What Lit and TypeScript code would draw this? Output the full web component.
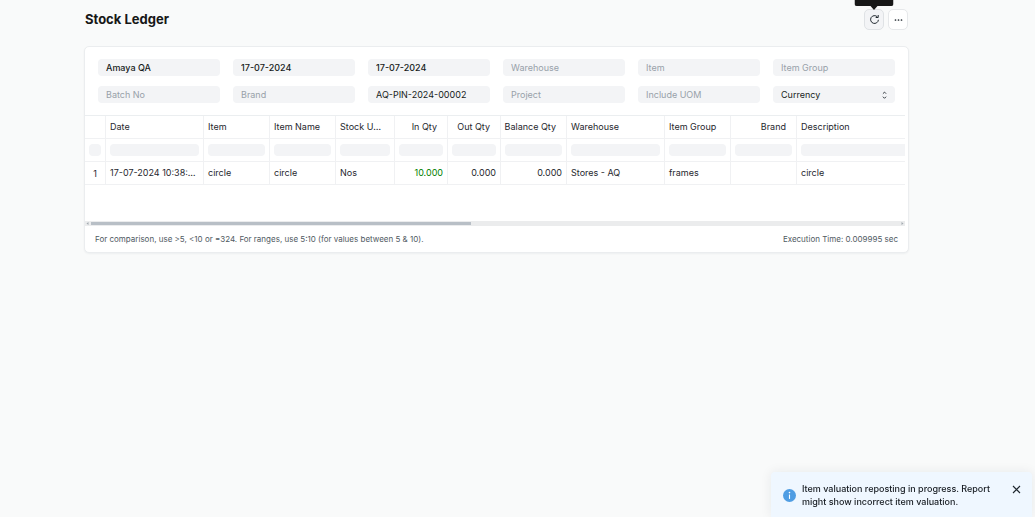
import { LitElement, html, css, svg } from "lit";
import { customElement } from "lit/decorators.js";
import { classMap } from "lit/directives/class-map.js";

interface Filter {
  label: string;
  value?: string;
  required?: boolean;
  options?: string[];
}

interface Column {
  label: string;
  width: number;
  value: string;
  right?: boolean;
  positive?: boolean;
}

const FILTERS: Filter[] = [
  { label: "Company", value: "Amaya QA", required: true },
  { label: "From Date", value: "17-07-2024", required: true },
  { label: "To Date", value: "17-07-2024", required: true },
  { label: "Warehouse" },
  { label: "Item" },
  { label: "Item Group" },
  { label: "Batch No" },
  { label: "Brand" },
  { label: "Voucher #", value: "AQ-PIN-2024-00002" },
  { label: "Project" },
  { label: "Include UOM" },
  { label: "Valuation Field Type", options: ["Currency", "Float"] },
];

const COLUMNS: Column[] = [
  { label: "Date", width: 98, value: "17-07-2024 10:38:45" },
  { label: "Item", width: 66, value: "circle" },
  { label: "Item Name", width: 66, value: "circle" },
  { label: "Stock UOM", width: 59, value: "Nos" },
  { label: "In Qty", width: 53, value: "10.000", right: true, positive: true },
  { label: "Out Qty", width: 53, value: "0.000", right: true },
  { label: "Balance Qty", width: 66, value: "0.000", right: true },
  { label: "Warehouse", width: 98, value: "Stores - AQ" },
  { label: "Item Group", width: 66, value: "frames" },
  { label: "Brand", width: 66, value: "", right: true },
  { label: "Description", width: 130, value: "circle" },
];

@customElement("report-filters")
export class ReportFilters extends LitElement {
  static styles = css`
    :host {
      display: grid;
      grid-template-columns: repeat(6, 1fr);
      gap: 10px 13px;
      padding: 12px 13px;
    }
    .field {
      position: relative;
      display: block;
      min-width: 0;
    }
    .control {
      display: block;
      box-sizing: border-box;
      width: 100%;
      height: 17px;
      margin: 0;
      padding: 0 8px;
      border: 0;
      border-radius: 4px;
      background: #f3f4f6;
      color: #171c22;
      font: 400 9px/17px Inter, sans-serif;
      appearance: none;
      outline: none;
    }
    .control::placeholder {
      color: #98a1a9;
      opacity: 1;
    }
    .required {
      font-weight: 500;
    }
    .arrows {
      position: absolute;
      right: 7px;
      top: 4px;
      width: 7px;
      height: 10px;
      pointer-events: none;
    }
  `;

  render() {
    return FILTERS.map((f) =>
      f.options
        ? html`<label class="field">
            <select class="control" aria-label=${f.label}>
              ${f.options.map((o) => html`<option>${o}</option>`)}
            </select>
            <svg class="arrows" viewBox="0 0 7 10" fill="none" stroke="#1f272e" stroke-width="0.9">
              <path d="M1.900 3.700 3.500 2.100 5.100 3.700M1.900 6.700 3.500 8.300 5.100 6.700" />
            </svg>
          </label>`
        : html`<label class="field">
            <input
              class=${classMap({ control: true, required: !!f.required })}
              type="text"
              aria-label=${f.label}
              placeholder=${f.label}
              .value=${f.value ?? ""}
            />
          </label>`
    );
  }
}

@customElement("report-table")
export class ReportTable extends LitElement {
  static styles = css`
    :host {
      display: block;
      margin-right: 3px;
    }
    .viewport {
      overflow: hidden;
      border-top: 1px solid #ebeef0;
      padding-bottom: 36px;
    }
    .grid {
      table-layout: fixed;
      border-collapse: separate;
      border-spacing: 0;
      width: 842px;
      color: #1f272e;
      font: 400 9px/12px Inter, sans-serif;
    }
    .cell {
      box-sizing: border-box;
      height: 23px;
      padding: 0 4px;
      border-right: 1px solid #f0f1f3;
      border-bottom: 1px solid #f0f1f3;
      text-align: left;
      font-weight: 400;
      white-space: nowrap;
      overflow: hidden;
      text-overflow: ellipsis;
    }
    .head {
      padding-right: 10px;
    }
    .right {
      text-align: right;
    }
    .head.right {
      padding-left: 0;
    }
    .index {
      padding-top: 2px;
      text-align: center;
    }
    .positive {
      color: green;
    }
    .search {
      display: block;
      box-sizing: border-box;
      width: 100%;
      height: 12px;
      margin: 0;
      padding: 0 4px;
      border: 0;
      border-radius: 4px;
      background: #f3f4f6;
      font: 400 9px/12px Inter, sans-serif;
      outline: none;
    }
    .track {
      display: flex;
      align-items: center;
      height: 5px;
      gap: 2px;
      padding: 0 1px;
      background: #ebeced;
    }
    .arrow {
      width: 3px;
      height: 3px;
      fill: #a3aab0;
    }
    .rail {
      flex: 1;
    }
    .thumb {
      width: 47%;
      height: 3px;
      background: #b8bfc6;
    }
  `;

  render() {
    return html`
      <div class="viewport">
        <table class="grid">
          <colgroup>
            <col style="width:21px" />
            ${COLUMNS.map((c) => html`<col style="width:${c.width}px" />`)}
          </colgroup>
          <thead>
            <tr>
              <th class="cell"></th>
              ${COLUMNS.map(
                (c) => html`<th scope="col" class=${classMap({ cell: true, head: true, right: !!c.right })}>${c.label}</th>`
              )}
            </tr>
            <tr>
              <td class="cell"><input class="search" type="text" aria-label="Filter row number" /></td>
              ${COLUMNS.map(
                (c) => html`<td class="cell"><input class="search" type="text" aria-label="Filter ${c.label}" /></td>`
              )}
            </tr>
          </thead>
          <tbody>
            <tr>
              <td class="cell index">1</td>
              ${COLUMNS.map(
                (c) =>
                  html`<td class=${classMap({ cell: true, right: !!c.right, positive: !!c.positive })}>${c.value}</td>`
              )}
            </tr>
          </tbody>
        </table>
      </div>
      <div class="track">
        <svg class="arrow" viewBox="0 0 3 3"><path d="M2.5 0v3L.5 1.5z" /></svg>
        <div class="rail"><div class="thumb"></div></div>
        <svg class="arrow" viewBox="0 0 3 3"><path d="M.5 0v3l2-1.5z" /></svg>
      </div>
    `;
  }
}

@customElement("toast-message")
export class ToastMessage extends LitElement {
  static styles = css`
    :host {
      display: flex;
      align-items: flex-start;
      box-sizing: border-box;
      width: 261px;
      padding: 10px 11px 9px 12px;
      border-radius: 4px 4px 0 0;
      background: #eff7ff;
      box-shadow: 0 0 12px rgba(25, 39, 52, 0.08);
    }
    .info {
      flex: none;
      width: 13px;
      height: 13px;
      margin: 7px 6px 0 0;
    }
    .text {
      flex: 1;
      margin: 0;
      color: #171c22;
      font: 500 9px/13px Inter, sans-serif;
    }
    .close {
      flex: none;
      width: 9px;
      height: 9px;
      margin-top: 3px;
      padding: 0;
      border: 0;
      background: none;
    }
    .cross {
      display: block;
      width: 9px;
      height: 9px;
    }
  `;

  render() {
    return html`
      <svg class="info" viewBox="0 0 13 13">
        <circle cx="6.5" cy="6.5" r="6.5" fill="#4f9de3" />
        <circle cx="6.5" cy="3.6" r=".8" fill="#fff" />
        <path d="M6.5 5.5v4.4" stroke="#fff" stroke-width="1.1" />
      </svg>
      <p class="text">Item valuation reposting in progress. Report might show incorrect item valuation.</p>
      <button class="close" aria-label="Close">
        <svg class="cross" viewBox="0 0 9 9" stroke="#1f272e" stroke-width="1.1" fill="none">
          <path d="M1 1l7 7M8 1 1 8" />
        </svg>
      </button>
    `;
  }
}

@customElement("app-root")
export class AppRoot extends LitElement {
  static styles = css`
    :host {
      display: block;
      box-sizing: border-box;
      min-height: 100vh;
      padding: 0 127px 0 85px;
      background: #f9fafa;
      font-family: Inter, sans-serif;
      color: #1f272e;
    }
    .header {
      display: flex;
      align-items: center;
      justify-content: space-between;
      height: 39px;
      margin-bottom: 7px;
    }
    .title {
      margin: 0;
      padding-bottom: 2px;
      font: 700 13px/16px Inter, sans-serif;
      color: #171717;
    }
    .actions {
      display: flex;
      gap: 4px;
    }
    .action {
      position: relative;
      display: grid;
      place-items: center;
      box-sizing: border-box;
      width: 20px;
      height: 21px;
      padding: 0;
      border: 1px solid #e6e8ea;
      border-radius: 5px;
      background: #fff;
    }
    .active {
      background: #f3f4f6;
      border-color: #dfe2e5;
    }
    .glyph {
      width: 11px;
      height: 11px;
    }
    .tooltip {
      position: absolute;
      left: 50%;
      bottom: 19px;
      width: 39px;
      height: 10px;
      transform: translateX(-50%);
      fill: #171717;
    }
    .card {
      border: 1px solid #ebedef;
      border-radius: 5px;
      margin: 0 -1px;
      background: #fff;
      box-shadow: 0 1px 2px rgba(25, 39, 52, 0.05);
    }
    .footer {
      display: flex;
      justify-content: space-between;
      padding: 7px 10px 6px;
      color: #505a62;
      font: 400 8px/13px Inter, sans-serif;
    }
    .toast {
      position: fixed;
      right: 3px;
      bottom: 0;
    }
  `;

  render() {
    return html`
      <header class="header">
        <h1 class="title">Stock Ledger</h1>
        <div class="actions">
          <button class="action active" aria-label="Refresh">
            <svg class="tooltip" viewBox="0 0 39 10">
              <path d="M0 0h39v4a2 2 0 0 1-2 2H23l-3.500 4L16 6H2a2 2 0 0 1-2-2z" />
            </svg>
            ${this.refreshIcon()}
          </button>
          <button class="action" aria-label="Menu">
            <svg class="glyph" viewBox="0 0 11 11" fill="#1f272e">
              <circle cx="2.500" cy="6" r=".85" />
              <circle cx="5.500" cy="6" r=".85" />
              <circle cx="8.500" cy="6" r=".85" />
            </svg>
          </button>
        </div>
      </header>
      <main class="card">
        <report-filters></report-filters>
        <report-table></report-table>
        <div class="footer">
          <span>For comparison, use &gt;5, &lt;10 or =324. For ranges, use 5:10 (for values between 5 &amp; 10).</span>
          <span>Execution Time: 0.009995 sec</span>
        </div>
      </main>
      <toast-message class="toast" role="status"></toast-message>
    `;
  }

  private refreshIcon() {
    return html`<svg class="glyph" viewBox="0 0 11 11" fill="none" stroke="#1f272e" stroke-width="1">
      ${svg`<path d="M9.400 5.800A3.900 3.900 0 1 1 8.300 2.800" /><path d="M9.200 1v2.500H6.700" />`}
    </svg>`;
  }
}
